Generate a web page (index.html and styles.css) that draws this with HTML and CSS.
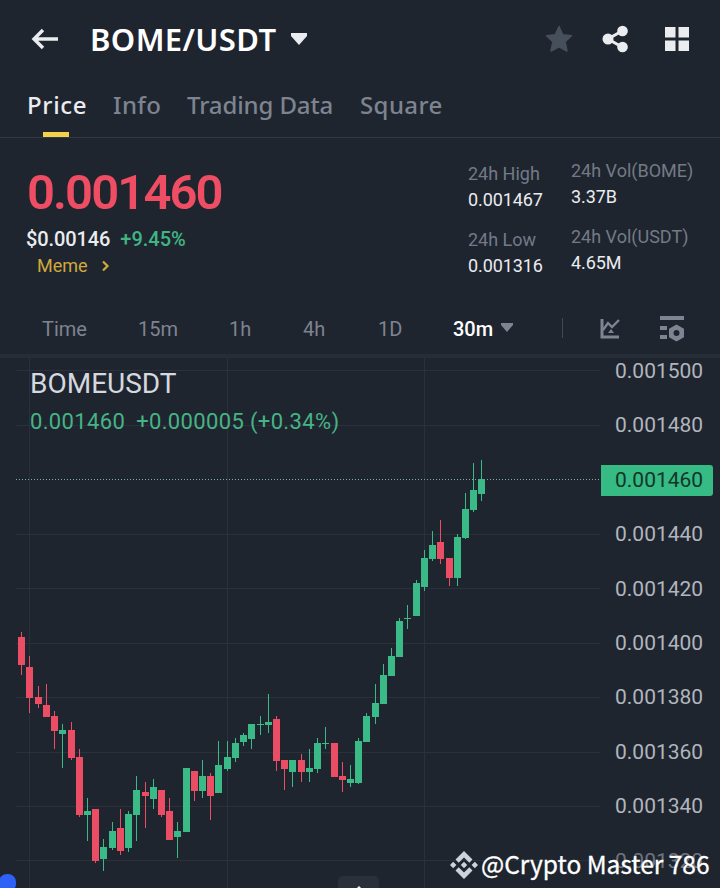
FILE: index.html
```html
<!doctype html>
<html lang="en">
    <head>
        <meta charset="utf-8">
        <title>BOME/USDT</title>
        <meta name="viewport" content="width=device-width, initial-scale=1">
        <link rel="stylesheet" href="styles.css">
    </head>
    <body>
        <div class="header">
            <svg class="back" width="28" height="22" viewBox="0 0 28 22"><path d="M12 2L3 11l9 9M3 11h24" /></svg>
            <div class="pair">BOME/USDT</div>
            <svg class="caret" width="18" height="14" viewBox="0 0 18 14"><path d="M1 1h16v3l-8 9-8-9z" /></svg>
            <div class="actions">
                <svg width="28" height="28" viewBox="0 0 28 28"><path fill="#474f5b" stroke="#474f5b" stroke-width="1.5" stroke-linejoin="round" d="M14 1.5l3.7 8.2 8.8 1-6.4 6.1 1.9 9.2-8-4.2-8 4.2 1.9-9.2-6.4-6.1 8.8-1z" /></svg>
                <svg width="28" height="28" viewBox="0 0 28 28" fill="#eaecef"><circle cx="7" cy="14" r="5.5" /><circle cx="21.5" cy="6" r="5.3" /><circle cx="21.5" cy="22" r="5.3" /><path fill="none" stroke="#eaecef" stroke-width="3" d="M21 6L7 14l14 8" /></svg>
                <svg width="26" height="26" viewBox="0 0 26 26" fill="#eaecef"><path d="M1 1h10.5v10.5H1zM14.500 1H25v10.500H14.500zM1 14.500h10.500V25H1zM14.500 14.500H25V25H14.500z" /></svg>
            </div>
        </div>

        <div class="tabs">
            <div class="tab active">Price</div>
            <div class="tab">Info</div>
            <div class="tab wide">Trading Data</div>
            <div class="tab">Square</div>
        </div>

        <div class="summary">
            <div class="quote">
                <div class="price">0.001460</div>
                <div class="change"><span class="usd">$0.00146</span><span class="green">+9.45%</span></div>
                <div class="tag">Meme <svg width="9" height="12" viewBox="0 0 9 12"><path d="M2 1.500L6.500 6 2 10.500" /></svg></div>
            </div>
            <div class="stats">
                <div class="label">24h High</div>
                <div class="value">0.001467</div>
                <div class="label">24h Low</div>
                <div class="value">0.001316</div>
            </div>
            <div class="stats volume">
                <div class="label">24h Vol(BOME)</div>
                <div class="value">3.37B</div>
                <div class="label">24h Vol(USDT)</div>
                <div class="value">4.65M</div>
            </div>
        </div>

        <div class="intervals">
            <div>Time</div>
            <div>15m</div>
            <div>1h</div>
            <div>4h</div>
            <div>1D</div>
            <div class="selected">30m <svg width="12" height="10" viewBox="0 0 12 10"><path d="M0 0h12v2L6 9 0 2z" /></svg></div>
            <div class="divider"></div>
            <svg class="tool" width="22" height="22" viewBox="0 0 22 22"><path fill="none" stroke="#7d8592" stroke-width="3" d="M3 1v18h17" /><path fill="none" stroke="#7d8592" stroke-width="2.400" d="M4 12l5-7 4 4 7-7" /><path fill="#7d8592" d="M12 11l3 4H9z" /></svg>
            <svg class="tool" width="26" height="26" viewBox="0 0 26 26" fill="#7d8592"><path d="M1 0h24v4H1zM1 10h7v4H1zM1 19h7v4H1z" /><path fill-rule="evenodd" d="M17.500 8.500l7.500 4.200v8.600l-7.500 4.200-7.500-4.200v-8.600zM17.500 14a3 3 0 1 0 0 6 3 3 0 0 0 0-6z" /></svg>
        </div>

        <div class="chart">
            <svg id="plot" width="601" height="530" viewBox="0 358 601 530"></svg>
            <div class="legend">
                <div class="symbol">BOMEUSDT</div>
                <div class="last"><span>0.001460</span><span>+0.000005 (+0.34%)</span></div>
            </div>
            <div class="axis">
                <div>0.001500</div>
                <div>0.001480</div>
                <div class="current">0.001460</div>
                <div>0.001440</div>
                <div>0.001420</div>
                <div>0.001400</div>
                <div>0.001380</div>
                <div>0.001360</div>
                <div>0.001340</div>
                <div class="faded">0.001320</div>
            </div>
            <div class="dot"></div>
            <div class="handle"><svg width="6" height="4" viewBox="0 0 6 4"><path d="M0 4l3-3 3 3" /></svg></div>
            <div class="watermark">
                <svg width="28" height="28" viewBox="0 0 28 28"><path d="M14 0l8.500 8.500-3.200 3.200L14 6.400l-5.300 5.300-3.200-3.200zM14 28l8.500-8.500-3.200-3.200L14 21.600l-5.300-5.300-3.200 3.200zM14 10.800l3.200 3.200-3.200 3.200-3.200-3.200zM3.200 10.800L6.400 14l-3.200 3.200L0 14zM24.800 10.800L28 14l-3.200 3.200-3.200-3.200z" /></svg>
                <span>@Crypto Master 786</span>
            </div>
        </div>

        <script src="chart.js"></script>
    </body>
</html>
```
FILE: styles.css
```css
body {
    margin: 0;
    width: 720px;
    height: 888px;
    overflow: hidden;
    background-color: #1f252f;
    color: #eaecef;
    font-family: Roboto, sans-serif;
}

svg {
    display: block;
}

.header {
    display: flex;
    align-items: center;
    box-sizing: border-box;
    height: 78px;
    padding: 0 30px 0 31px;
}

.back {
    fill: none;
    stroke: #eaecef;
    stroke-width: 3.4;
}

.pair {
    width: 187px;
    margin-left: 31px;
    font: 600 31px/40px "Noto Sans", sans-serif;
    letter-spacing: 0.4px;
    color: #fff;
    white-space: nowrap;
}

.caret {
    margin-left: 13px;
    fill: #eaecef;
}

.actions {
    display: flex;
    align-items: center;
    margin-left: auto;
}

.actions svg {
    margin-left: 28px;
}

.actions svg:last-child {
    margin-left: 35px;
}

.tabs {
    display: grid;
    grid-template-columns: 86px 74px 173px 100px;
    box-sizing: border-box;
    height: 60px;
    padding-left: 27px;
    border-bottom: 1px solid #333944;
    font: 500 24px/54px "Noto Sans", sans-serif;
    letter-spacing: 0.4px;
    color: #7d8490;
    white-space: nowrap;
}

.tab.active {
    position: relative;
    letter-spacing: 0.7px;
    color: #eaecef;
}

.tab.wide {
    letter-spacing: -0.1px;
}

.tab.active:after {
    content: "";
    position: absolute;
    left: 16px;
    bottom: 0;
    width: 26px;
    height: 5px;
    background-color: #f5d04c;
}

.summary {
    display: flex;
    height: 164px;
}

.quote {
    width: 441px;
    padding-left: 27px;
}

.price {
    height: 88px;
    font-size: 49px;
    line-height: 110px;
    font-weight: 600;
    letter-spacing: -1.9px;
    color: #ee4d63;
}

.change {
    display: flex;
    gap: 10px;
    font-size: 20px;
    line-height: 27px;
    font-weight: 500;
}

.usd {
    margin-left: -1px;
    letter-spacing: -0.1px;
}

.green {
    color: #3fb583;
}

.tag {
    display: flex;
    align-items: center;
    gap: 13px;
    padding-left: 10px;
    font-size: 18px;
    line-height: 26px;
    color: #d0a83c;
}

.tag svg {
    fill: none;
    stroke: #d0a83c;
    stroke-width: 2.2;
}

.stats {
    width: 103px;
    padding-top: 23px;
    font-size: 18px;
    line-height: 26px;
    white-space: nowrap;
}

.volume {
    padding-top: 20px;
}

.label {
    color: #737a86;
}

.value {
    margin-bottom: 14px;
    letter-spacing: -0.1px;
}

.intervals {
    display: grid;
    grid-template-columns: 96px 91px 74px 75px 75px 109px 37px 60px 30px;
    align-items: center;
    box-sizing: border-box;
    height: 56px;
    padding: 2px 0 0 42px;
    border-bottom: 4px solid #272d37;
    font-size: 20px;
    color: #7d8490;
}

.selected {
    display: flex;
    align-items: center;
    gap: 8px;
    color: #fff;
    font-weight: 500;
}

.selected svg {
    margin-top: -2px;
    fill: #7d8592;
}

.divider {
    width: 1px;
    height: 20px;
    margin-top: -2px;
    background-color: #414853;
}

.tool {
    margin-top: -1px;
}

.chart {
    position: relative;
    display: flex;
    height: 530px;
}

.legend {
    position: absolute;
    left: 30px;
    top: 8px;
}

.symbol {
    font-size: 28px;
    line-height: 36px;
    color: #d5d8df;
}

.last {
    display: flex;
    gap: 11px;
    margin-top: 6px;
    font-size: 22px;
    line-height: 28px;
    letter-spacing: 0.35px;
    color: #46b486;
}

.axis {
    margin-top: -2px;
    font-size: 21px;
    color: #b1b5be;
}

.axis div {
    width: 98px;
    height: 31px;
    margin-bottom: 23.400px;
    padding-left: 14px;
    line-height: 31px;
}

.axis .current {
    border-radius: 0 3px 3px 0;
    background-color: #35bb83;
    color: #12352a;
}

.axis .faded {
    color: #6e737e;
}

.dot {
    position: absolute;
    left: -1px;
    bottom: -4px;
    width: 17px;
    height: 18px;
    border-radius: 8px;
    background-color: #2e62f6;
}

.handle {
    position: absolute;
    left: 338px;
    bottom: 0;
    width: 41px;
    height: 12px;
    border-radius: 5px 5px 0 0;
    background-color: #2a303a;
}

.handle svg {
    margin: 10px auto 0;
    fill: none;
    stroke: #eaecef;
    stroke-width: 1.5;
}

.watermark {
    position: absolute;
    left: 450px;
    bottom: 6px;
    display: flex;
    align-items: center;
    gap: 3px;
    font: 400 24.500px/36px "Noto Sans CJK SC", sans-serif;
    color: #fff;
    white-space: nowrap;
}

.watermark span {
    margin-top: -2px;
    -webkit-text-stroke: 0.3px #fff;
}

.watermark svg {
    fill: #cfd2dc;
}
```
FILE: chart.js
```js
// left edge, body top, body bottom, wick top, wick bottom, direction
var candles = [
    [18, 637, 665, 632, 675, 'd'],
    [26, 667, 698, 656, 713, 'd'],
    [35, 697, 704, 686, 708, 'd'],
    [43, 705, 717, 684, 717, 'd'],
    [51, 716, 731, 711, 749, 'd'],
    [59, 730, 734, 724, 768, 'u'],
    [68, 730, 758, 722, 760, 'd'],
    [76, 757, 815, 749, 817, 'd'],
    [84, 811, 815, 798, 841, 'u'],
    [92, 809, 861, 809, 863, 'd'],
    [100, 847, 859, 839, 871, 'u'],
    [109, 831, 848, 822, 850, 'u'],
    [117, 828, 851, 809, 855, 'd'],
    [125, 814, 848, 811, 852, 'u'],
    [133, 790, 815, 776, 841, 'u'],
    [142, 792, 796, 782, 828, 'd'],
    [150, 787, 799, 779, 809, 'u'],
    [158, 790, 815, 790, 817, 'd'],
    [166, 811, 840, 798, 840, 'd'],
    [174, 831, 837, 822, 858, 'u'],
    [183, 768, 832, 768, 832, 'u'],
    [191, 771, 791, 771, 801, 'd'],
    [199, 776, 791, 760, 798, 'u'],
    [207, 776, 796, 773, 820, 'd'],
    [215, 765, 793, 741, 793, 'u'],
    [224, 757, 769, 741, 771, 'u'],
    [232, 743, 758, 738, 762, 'u'],
    [240, 735, 742, 733, 746, 'u'],
    [248, 724, 739, 724, 749, 'u'],
    [257, 724, 725, 716, 735, 'u'],
    [265, 722, 725, 694, 733, 'u'],
    [273, 719, 761, 716, 771, 'd'],
    [281, 760, 769, 760, 790, 'd'],
    [289, 760, 772, 760, 787, 'u'],
    [298, 760, 772, 754, 782, 'd'],
    [306, 768, 772, 749, 782, 'u'],
    [314, 743, 769, 738, 773, 'u'],
    [322, 743, 744, 727, 749, 'u'],
    [331, 743, 777, 743, 777, 'd'],
    [339, 776, 780, 762, 792, 'd'],
    [347, 779, 783, 765, 787, 'u'],
    [355, 741, 783, 738, 784, 'u'],
    [363, 716, 742, 713, 742, 'u'],
    [372, 703, 717, 684, 724, 'u'],
    [380, 675, 704, 664, 704, 'u'],
    [388, 656, 676, 648, 676, 'u'],
    [396, 621, 657, 618, 657, 'u'],
    [404, 618, 619, 605, 629, 'u'],
    [413, 583, 616, 580, 616, 'u'],
    [421, 558, 587, 550, 591, 'u'],
    [429, 545, 559, 531, 561, 'u'],
    [437, 542, 559, 520, 564, 'd'],
    [446, 558, 578, 558, 586, 'd'],
    [454, 537, 578, 534, 586, 'u'],
    [462, 509, 538, 493, 539, 'u'],
    [470, 490, 510, 463, 512, 'u'],
    [478, 479, 494, 460, 501, 'u']
];

var plot = document.getElementById('plot');

function rect(x, y, width, height, fill)
{
    var el = document.createElementNS('http://www.w3.org/2000/svg', 'rect');
    el.setAttribute('x', x);
    el.setAttribute('y', y);
    el.setAttribute('width', width);
    el.setAttribute('height', height);
    el.setAttribute('fill', fill);
    plot.appendChild(el);
}

// Grid
[370, 425, 534, 588, 643, 697, 752, 806, 860].forEach(function(y)
{
    rect(16, y, 584, 1, '#2b313b');
});

[29, 227, 424].forEach(function(x)
{
    rect(x, 358, 1, 530, '#2b313b');
});

// Current price line
for(var x = 16; x < 600; x += 3)
{
    rect(x, 479, 1, 1, '#7fae9f');
}

candles.forEach(function(c)
{
    var color = c[5] == 'u' ? '#3aba86' : '#ea4d64';

    rect(c[0] + 3, c[3], 1, c[4] - c[3], color);
    rect(c[0], c[1], 7, c[2] - c[1], color);
});
```
